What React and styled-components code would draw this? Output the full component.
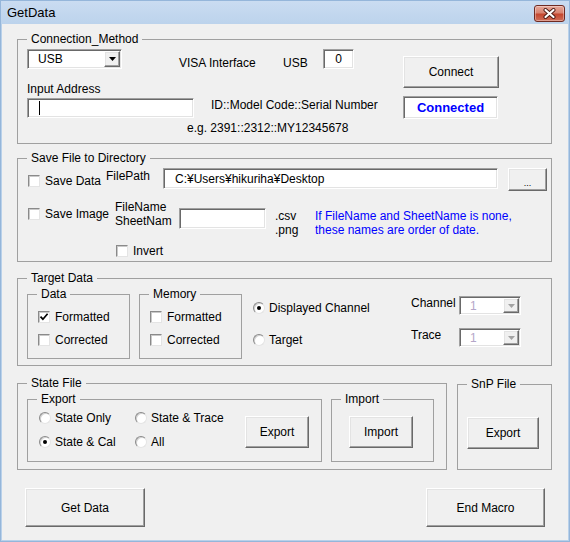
import React from 'react';
import styled, { createGlobalStyle, css } from 'styled-components';

const Global = createGlobalStyle`
  html, body { margin: 0; padding: 0; background: #f0f0f0; }
  body {
    font-family: "Liberation Sans", Arial, sans-serif;
    font-size: 12px;
    color: #000;
  }
  *, *::before, *::after { box-sizing: border-box; }
`;

const sunken = css`
  border: 1px solid;
  border-color: #a0a0a0 #ffffff #ffffff #a0a0a0;
  box-shadow: inset 1px 1px 0 #696969, inset -1px -1px 0 #e3e3e3;
  background: #fff;
`;

const raised = css`
  border: 1px solid;
  border-color: #ffffff #696969 #696969 #ffffff;
  box-shadow: inset -1px -1px 0 #a0a0a0, inset 1px 1px 0 #e3e3e3;
  background: #f0f0f0;
`;

const spacing = css`
  margin: ${(p) => p.$mt || 0}px 0 0 ${(p) => p.$ml || 0}px;
`;

/* ---------- window chrome ---------- */

const Window = styled.div`
  width: 570px;
  height: 542px;
  display: flex;
  flex-direction: column;
  background: #b9d1ea;
  padding: 0 2px 2px 2px;
  box-shadow: inset 0 0 0 1px #95b6da;
`;

const TitleBar = styled.div`
  height: 24px;
  margin: 0 -2px;
  padding: 0 4px 0 6px;
  display: flex;
  align-items: flex-start;
  justify-content: space-between;
  background: linear-gradient(#cadcf1, #bcd3ec);
  border-left: 1px solid #95b6da;
  border-right: 1px solid #95b6da;
  border-top: 1px solid #95b6da;
`;

const TitleText = styled.span`
  font-size: 13px;
  line-height: 16px;
  margin-top: 4px;
`;

const CloseBox = styled.div`
  width: 31px;
  height: 17px;
  margin-top: 4px;
  border: 1px solid #6e2a22;
  border-radius: 3px;
  background: linear-gradient(#e6a798 0%, #d88472 45%, #c4472f 55%, #cf6e59 100%);
  box-shadow: inset 0 0 0 1px rgba(255, 255, 255, 0.35);
  display: flex;
  align-items: center;
  justify-content: center;
`;

const Client = styled.div`
  flex: 1;
  background: #f0f0f0;
  display: flex;
  flex-direction: column;
  padding: 8px 16px 0 15px;
`;

/* ---------- group boxes ---------- */

const Frame = styled.fieldset`
  margin: ${(p) => p.$mt || 0}px 0 0 ${(p) => p.$ml || 0}px;
  padding: 0;
  min-width: 0;
  border: 1px solid #a0a0a0;
  height: ${(p) => p.$h}px;
  width: ${(p) => (p.$w ? `${p.$w}px` : 'auto')};
  flex: none;
`;

const Caption = styled.legend`
  margin-left: 9px;
  padding: 0 4px;
  font-size: 12px;
  line-height: 14px;
`;

/* ---------- generic layout ---------- */

const Line = styled.div`
  display: flex;
  align-items: flex-start;
  ${spacing};
  padding-left: ${(p) => p.$pl || 0}px;
`;

const Stack = styled.div`
  display: flex;
  flex-direction: column;
  align-items: flex-start;
  gap: ${(p) => p.$gap || 0}px;
  ${spacing};
  padding-left: ${(p) => p.$pl || 0}px;
  width: ${(p) => (p.$w ? `${p.$w}px` : 'auto')};
  flex: none;
`;

const Label = styled.span`
  display: block;
  flex: none;
  line-height: 14px;
  white-space: nowrap;
  width: ${(p) => (p.$w ? `${p.$w}px` : 'auto')};
  ${spacing};
`;

const Note = styled(Label)`
  color: #0000ff;
`;

/* ---------- controls ---------- */

const Button = styled.button`
  ${raised};
  font-family: inherit;
  font-size: 12px;
  color: #000;
  padding: 0;
  flex: none;
  width: ${(p) => p.$w}px;
  height: ${(p) => p.$h}px;
  ${spacing};
`;

const Ellipsis = styled.span`
  font-size: 9px;
  position: relative;
  top: 2px;
`;

const Field = styled.div`
  ${sunken};
  flex: none;
  width: ${(p) => p.$w}px;
  height: ${(p) => p.$h}px;
  ${spacing};
  padding-left: ${(p) => p.$pl || 0}px;
  display: flex;
  align-items: center;
  justify-content: ${(p) => (p.$center ? 'center' : 'flex-start')};
  line-height: 14px;
  white-space: nowrap;
`;

const Caret = styled.span`
  width: 1px;
  height: 14px;
  background: #000;
`;

const Status = styled.div`
  ${sunken};
  width: 95px;
  height: 23px;
  margin-top: 8px;
  display: flex;
  align-items: center;
  justify-content: center;
  color: #0000ff;
  font-weight: bold;
  font-size: 13px;
`;

const Combo = styled.div`
  ${sunken};
  flex: none;
  width: ${(p) => p.$w}px;
  height: ${(p) => p.$h}px;
  padding: 1px;
  display: flex;
  align-items: stretch;
  color: ${(p) => (p.$disabled ? '#b4a6c8' : '#000')};
`;

const ComboValue = styled.span`
  flex: 1;
  display: flex;
  align-items: center;
  padding-left: ${(p) => p.$pl || 0}px;
`;

const ComboButton = styled.span`
  ${raised};
  width: 16px;
  display: flex;
  align-items: center;
  justify-content: center;
`;

const Box = styled.span`
  width: 12px;
  height: 12px;
  flex: none;
  background: #fff;
  border: 1px solid;
  border-color: #8a8a8a #e4e4e4 #e4e4e4 #8a8a8a;
  box-shadow: inset 1px 1px 0 #c9c9c9;
  display: flex;
  align-items: center;
  justify-content: center;
`;

const Dot = styled(Box)`
  border-radius: 50%;
  box-shadow: inset 1px 1px 0 #d2d2d2;
  &::after {
    content: '';
    display: ${(p) => (p.$on ? 'block' : 'none')};
    width: 4px;
    height: 4px;
    border-radius: 50%;
    background: #000;
  }
`;

const Option = styled.label`
  display: flex;
  align-items: center;
  gap: ${(p) => p.$gap}px;
  height: 14px;
  line-height: 14px;
  white-space: nowrap;
  flex: none;
  width: ${(p) => (p.$w ? `${p.$w}px` : 'auto')};
  ${spacing};
`;

const RadioGrid = styled.div`
  display: grid;
  grid-template-columns: 96px 110px;
  row-gap: 10px;
  margin: 5px 0 0 11px;
`;

/* ---------- section bodies ---------- */

const ConnBody = styled.div`
  display: flex;
  align-items: flex-start;
`;

const ConnLeft = styled.div`
  width: 385px;
  padding-left: 9px;
  display: flex;
  flex-direction: column;
  align-items: flex-start;
`;

const ConnRight = styled.div`
  margin-top: 10px;
  display: flex;
  flex-direction: column;
`;

const SaveBody = styled.div`
  padding-left: 10px;
`;

const PanelRow = styled.div`
  display: flex;
  align-items: flex-start;
  ${spacing};
`;

const Footer = styled.div`
  display: flex;
  justify-content: space-between;
  margin-top: 18px;
  padding: 0 7px 0 8px;
`;

/* ---------- small drawings ---------- */

const DownArrow = ({ color = '#000' }) => (
  <svg width="7" height="4" viewBox="0 0 7 4">
    <polygon points="0,0 7,0 3.5,4" fill={color} />
  </svg>
);

const CheckMark = () => (
  <svg width="10" height="10" viewBox="0 0 10 10">
    <polyline points="1.5,4.6 3.9,7.2 8.6,1.8" fill="none" stroke="#000" strokeWidth="1.7" />
  </svg>
);

const CloseGlyph = () => (
  <svg width="13" height="11" viewBox="0 0 13 11">
    <path d="M2.5 2 L10.5 9 M10.5 2 L2.5 9" stroke="#4a1812" strokeWidth="4" strokeLinecap="round" />
    <path d="M2.5 2 L10.5 9 M10.5 2 L2.5 9" stroke="#fff" strokeWidth="2.2" strokeLinecap="round" />
  </svg>
);

const Check = ({ label, on, $w, $mt }) => (
  <Option $gap={5} $w={$w} $mt={$mt}>
    <Box>{on && <CheckMark />}</Box>
    <span>{label}</span>
  </Option>
);

const Radio = ({ label, on, $w, $mt }) => (
  <Option $gap={4} $w={$w} $mt={$mt}>
    <Dot $on={on} />
    <span>{label}</span>
  </Option>
);

const Select = ({ value, w, h, pl, disabled }) => (
  <Combo $w={w} $h={h} $disabled={disabled}>
    <ComboValue $pl={pl}>{value}</ComboValue>
    <ComboButton>
      <DownArrow color={disabled ? '#a3a3a3' : '#000'} />
    </ComboButton>
  </Combo>
);

export default function App() {
  return (
    <>
      <Global />
      <Window>
        <TitleBar>
          <TitleText>GetData</TitleText>
          <CloseBox>
            <CloseGlyph />
          </CloseBox>
        </TitleBar>

        <Client>
          <Frame $h={112}>
            <Caption>Connection_Method</Caption>
            <ConnBody>
              <ConnLeft>
                <Line $mt={3}>
                  <Select value="USB" w={95} h={20} pl={9} />
                  <Label $w={104} $ml={57} $mt={7}>VISA Interface</Label>
                  <Label $w={40} $mt={7}>USB</Label>
                  <Field $w={31} $h={20} $center>0</Field>
                </Line>
                <Label $mt={12}>Input Address</Label>
                <Line $mt={2}>
                  <Field $w={167} $h={20} $pl={11}>
                    <Caret />
                  </Field>
                  <Label $ml={17}>ID::Model Code::Serial Number</Label>
                </Line>
                <Label $ml={160} $mt={3}>e.g. 2391::2312::MY12345678</Label>
              </ConnLeft>
              <ConnRight>
                <Button $w={96} $h={32}>Connect</Button>
                <Status>Connected</Status>
              </ConnRight>
            </ConnBody>
          </Frame>

          <Frame $h={111} $mt={7}>
            <Caption>Save File to Directory</Caption>
            <SaveBody>
              <Line $mt={3}>
                <Check $w={78} $mt={6} label="Save Data" />
                <Label $w={57} $mt={1}>FilePath</Label>
                <Field $w={335} $h={21} $pl={11}>C:¥Users¥hikuriha¥Desktop</Field>
                <Button $w={39} $h={23} $ml={10}>
                  <Ellipsis>...</Ellipsis>
                </Button>
              </Line>
              <Line $mt={9}>
                <Check $w={87} $mt={7} label="Save Image" />
                <Label $w={64}>
                  FileName
                  <br />
                  SheetNam
                </Label>
                <Field $w={87} $h={21} $mt={8} />
                <Label $w={40} $ml={9} $mt={9}>
                  .csv
                  <br />
                  .png
                </Label>
                <Note $mt={9}>
                  If FileName and SheetName is none,
                  <br />
                  these names are order of date.
                </Note>
              </Line>
              <Line $mt={7} $pl={88}>
                <Check label="Invert" />
              </Line>
            </SaveBody>
          </Frame>

          <Frame $h={95} $mt={9}>
            <Caption>Target Data</Caption>
            <Line $pl={9}>
              <Frame $w={103} $h={72} $mt={2}>
                <Caption>Data</Caption>
                <Stack $pl={10} $mt={9} $gap={9}>
                  <Check on label="Formatted" />
                  <Check label="Corrected" />
                </Stack>
              </Frame>
              <Frame $w={103} $h={72} $mt={2} $ml={9}>
                <Caption>Memory</Caption>
                <Stack $pl={10} $mt={9} $gap={9}>
                  <Check label="Formatted" />
                  <Check label="Corrected" />
                </Stack>
              </Frame>
              <Stack $w={158} $ml={11} $mt={16} $gap={18}>
                <Radio on label="Displayed Channel" />
                <Radio label="Target" />
              </Stack>
              <Stack $mt={11} $gap={13}>
                <Line>
                  <Label $w={48}>Channel</Label>
                  <Select value="1" w={62} h={19} pl={9} disabled />
                </Line>
                <Line>
                  <Label $w={48}>Trace</Label>
                  <Select value="1" w={62} h={19} pl={9} disabled />
                </Line>
              </Stack>
            </Line>
          </Frame>

          <PanelRow $mt={10}>
            <Frame $w={430} $h={94}>
              <Caption>State File</Caption>
              <Line $pl={9}>
                <Frame $w={295} $h={70} $mt={2}>
                  <Caption>Export</Caption>
                  <Line>
                    <RadioGrid>
                      <Radio label="State Only" />
                      <Radio label="State & Trace" />
                      <Radio on label="State & Cal" />
                      <Radio label="All" />
                    </RadioGrid>
                    <Button $w={64} $h={32} $mt={10}>Export</Button>
                  </Line>
                </Frame>
                <Frame $w={103} $h={70} $mt={2} $ml={9}>
                  <Caption>Import</Caption>
                  <Button $w={64} $h={32} $mt={10} $ml={17}>Import</Button>
                </Frame>
              </Line>
            </Frame>
            <Frame $w={95} $h={93} $mt={1} $ml={10}>
              <Caption>SnP File</Caption>
              <Button $w={72} $h={32} $mt={26} $ml={9}>Export</Button>
            </Frame>
          </PanelRow>

          <Footer>
            <Button $w={120} $h={39}>Get Data</Button>
            <Button $w={119} $h={39}>End Macro</Button>
          </Footer>
        </Client>
      </Window>
    </>
  );
}
